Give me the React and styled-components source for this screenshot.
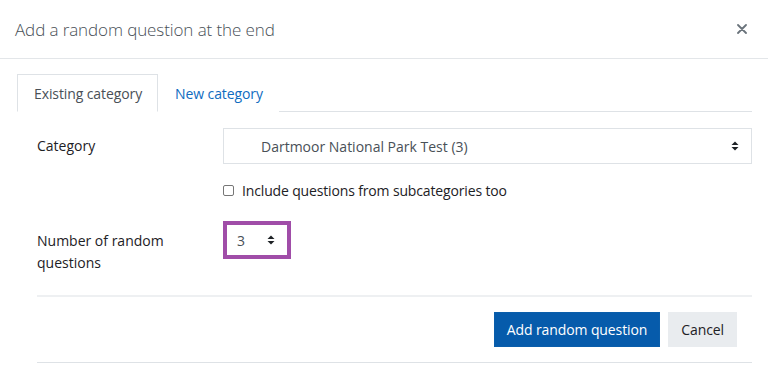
import React from "react";
import styled, { createGlobalStyle } from "styled-components";

const GlobalStyle = createGlobalStyle`
	html, body {
		margin: 0;
		padding: 0;
		background: #fff;
	}
	body {
		font-family: "Open Sans", "Noto Sans", sans-serif;
		font-size: 14px;
		color: #1d2125;
	}
	* {
		box-sizing: border-box;
	}
`

const Modal = styled.div`
	width: 768px;
	height: 386px;
	background: #fff;
	overflow: hidden;
`

const Header = styled.div`
	display: flex;
	align-items: center;
	justify-content: space-between;
	height: 59px;
	padding: 0 18px 0 15px;
	border-bottom: 1px solid #e3e6e9;
`

const Title = styled.h5`
	margin: 0;
	font-size: 17px;
	font-weight: 300;
	color: #495057;
	letter-spacing: -0.1px;
`

const CloseButton = styled.button`
	display: flex;
	align-items: center;
	justify-content: center;
	width: 16px;
	height: 16px;
	padding: 0;
	border: none;
	background: none;
	color: #6a737b;
	cursor: pointer;
`

const Body = styled.div`
	padding: 15px 16px 0 17px;
`

const TabList = styled.div`
	display: flex;
	border-bottom: 1px solid #dee2e6;
`

const Tab = styled.div`
	height: 38px;
	margin-bottom: -1px;
	padding: 0 15px 0 16px;
	display: flex;
	align-items: center;
	border: 1px solid ${(p) => (p.$active ? "#dee2e6" : "transparent")};
	border-bottom-color: ${(p) => (p.$active ? "#fff" : "transparent")};
	background: #fff;
	color: ${(p) => (p.$active ? "#495057" : "#0f6cbf")};
	letter-spacing: -0.1px;
	cursor: pointer;
`

const TabContent = styled.div`
	padding: 16px 0 0 20px;
`

const FormRow = styled.div`
	display: flex;
	align-items: flex-start;
	margin-bottom: ${(p) => p.$gap || 0}px;
`

const Label = styled.div`
	width: 186px;
	flex-shrink: 0;
	padding-top: ${(p) => p.$top || 0}px;
	line-height: 22px;
	color: #1d2125;
`

const Select = styled.div`
	display: flex;
	align-items: center;
	flex: ${(p) => (p.$wide ? 1 : "none")};
	width: ${(p) => (p.$wide ? "auto" : "60px")};
	height: ${(p) => (p.$wide ? 36 : 30)}px;
	padding: 0 12px 0 ${(p) => p.$indent}px;
	border: ${(p) => (p.$wide ? "1px solid #dee2e6" : "none")};
	background: #fff;
	color: #495057;
`

const SelectText = styled.span`
	flex: 1;
	white-space: nowrap;
`

const Highlight = styled.div`
	border: 4px solid #a04da8;
	margin-top: 4px;
`

const CheckRow = styled.label`
	display: flex;
	align-items: center;
	gap: 8px;
	height: 22px;
	color: #1d2125;
	letter-spacing: -0.15px;
`

const Checkbox = styled.span`
	width: 11px;
	height: 11px;
	border: 1px solid #767676;
	border-radius: 2px;
	background: #fff;
`

const Divider = styled.div`
	height: 0;
	border-top: ${(p) => p.$weight || 1}px solid ${(p) => p.$color || "#ebedef"};
`

const Footer = styled.div`
	display: flex;
	justify-content: flex-end;
	gap: 8px;
	padding: 15px 15px 15px 0;
`

const Button = styled.button`
	height: 35px;
	padding: 0 12px;
	border: 1px solid ${(p) => (p.$primary ? "#0a5eab" : "#e9ecef")};
	background: ${(p) => (p.$primary ? "#065bab" : "#e9ecef")};
	color: ${(p) => (p.$primary ? "#fff" : "#1d2125")};
	font-family: inherit;
	font-size: 14px;
	letter-spacing: -0.1px;
	cursor: pointer;
`

function Arrows() {
	return (
		<svg width="8" height="10" viewBox="0 0 8 10">
			<path d="M0.5 4 L4 0.5 L7.5 4 Z" fill="#1d2125" />
			<path d="M0.5 6 L4 9.5 L7.5 6 Z" fill="#1d2125" />
		</svg>
	)
}

export default function App() {
	return (
		<>
			<GlobalStyle />
			<Modal>
				<Header>
					<Title>Add a random question at the end</Title>
					<CloseButton aria-label="Close">
						<svg width="10" height="10" viewBox="0 0 10 10">
							<path d="M1 1 L9 9 M9 1 L1 9" stroke="currentColor" strokeWidth="1.8" strokeLinecap="round" />
						</svg>
					</CloseButton>
				</Header>
				<Body>
					<TabList>
						<Tab $active>Existing category</Tab>
						<Tab>New category</Tab>
					</TabList>
					<TabContent>
						<FormRow $gap={15}>
							<Label $top={7}>Category</Label>
							<Select $wide $indent={37}>
								<SelectText>Dartmoor National Park Test (3)</SelectText>
								<Arrows />
							</Select>
						</FormRow>
						<FormRow $gap={16}>
							<Label />
							<CheckRow>
								<Checkbox />
								Include questions from subcategories too
							</CheckRow>
						</FormRow>
						<FormRow $gap={21}>
							<Label $top={13}>Number of random<br />questions</Label>
							<Highlight>
								<Select $indent={10}>
									<SelectText>3</SelectText>
									<Arrows />
								</Select>
							</Highlight>
						</FormRow>
						<Divider $weight={2} $color="#eef0f2" />
						<Footer>
							<Button $primary>Add random question</Button>
							<Button>Cancel</Button>
						</Footer>
						<Divider $weight={1} $color="#dee2e6" />
					</TabContent>
				</Body>
			</Modal>
		</>
	)
}
